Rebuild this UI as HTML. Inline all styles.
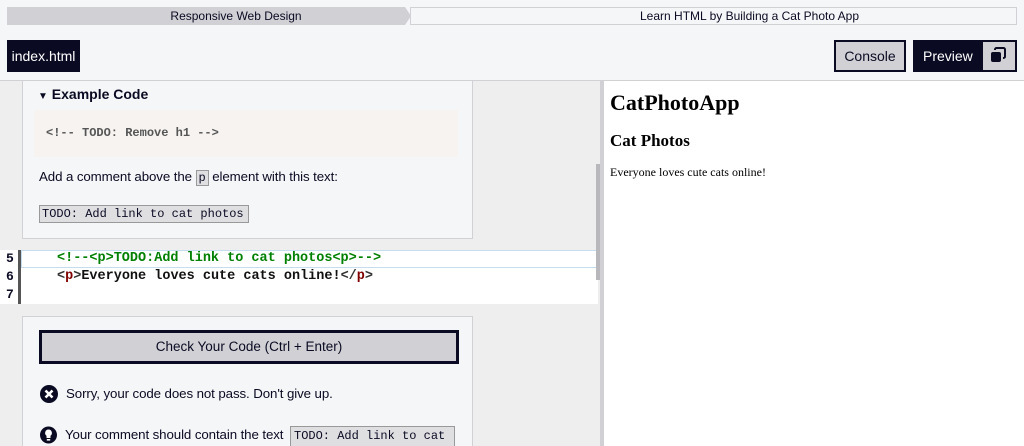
<!DOCTYPE html>
<html style="overflow:hidden;height:446px"><head><meta charset="utf-8"><style>
*{box-sizing:border-box;margin:0;padding:0}
body{width:1024px;height:446px;overflow:hidden;background:#f5f6f7;font-family:"Liberation Sans",sans-serif;position:relative;color:#0a0a23}
.abs{position:absolute}
.mono{font-family:"Liberation Mono","DejaVu Sans Mono",monospace}
</style></head><body>
<div class="abs" style="left:7px;top:7px;width:398px;height:18px;background:#d0d0d5;font-size:12px;line-height:18px;text-align:center;padding-left:60px">Responsive Web Design</div>
<div class="abs" style="left:405px;top:7px;width:0;height:0;border-top:9px solid transparent;border-bottom:9px solid transparent;border-left:6px solid #d0d0d5"></div>
<div class="abs" style="left:410px;top:7px;width:607px;height:18px;border:1px solid #d0d0d5;font-size:12px;line-height:16px;padding-left:229px">Learn HTML by Building a Cat Photo App</div>
<div class="abs" style="left:7px;top:40px;width:73px;height:32px;background:#0a0a23;color:#fff;font-size:14px;line-height:32px;text-align:center">index.html</div>
<div class="abs" style="left:834px;top:40px;width:72px;height:32px;background:#d0d0d5;border:2px solid #0a0a23;font-size:14px;line-height:28px;text-align:center">Console</div>
<div class="abs" style="left:913px;top:40px;width:104px;height:32px;background:#0a0a23;color:#fff;font-size:14px;line-height:32px;padding-left:10px">Preview</div>
<div class="abs" style="left:983px;top:42px;width:32px;height:28px;background:#d0d0d5"></div>
<svg class="abs" style="left:990px;top:47px" width="16" height="16" viewBox="0 0 16 16"><rect x="1" y="5" width="10" height="10" rx="2" fill="#0a0a23"/><path d="M5 3V2.5A1.5 1.5 0 0 1 6.5 1H13.5A1.5 1.5 0 0 1 15 2.5V9.5A1.5 1.5 0 0 1 13.5 11H13" fill="none" stroke="#0a0a23" stroke-width="2"/></svg>
<div class="abs" style="left:0;top:80px;width:1024px;height:1px;background:#d0d0d5"></div>
<div class="abs" style="left:0;top:81px;width:600px;height:365px;background:#eeeeee"></div>
<div class="abs" style="left:22px;top:81px;width:451px;height:158px;background:#f5f6f7;border:1px solid #d0d0d5;border-top:none"></div>
<div class="abs" style="left:38px;top:85px;font-size:14px;font-weight:bold;line-height:18px"><span style="font-size:10px">▼</span> Example Code</div>
<div class="abs mono" style="left:34px;top:110px;height:47px;background:#f6f3f1;font-size:12px;line-height:47px;padding-left:12px;color:#555;font-weight:bold;width:424px">&lt;!-- TODO: Remove h1 --&gt;</div>
<div class="abs" style="left:39px;top:167px;font-size:13.3px;line-height:20px;letter-spacing:-0.1px">Add a comment above the <span class="mono" style="background:#dfdfe2;border:1px solid #999;font-size:12px;padding:0 2px">p</span> element with this text:</div>
<div class="abs mono" style="left:39px;top:205px;width:210px;height:18px;background:#dfdfe2;border:1px solid #999;font-size:12px;line-height:16px;padding-left:2px">TODO: Add link to cat photos</div>
<div class="abs" style="left:0;top:250px;width:598px;height:54px;background:#fff"></div>
<div class="abs" style="left:18px;top:250px;width:3px;height:54px;background:#555"></div>
<div class="abs" style="left:21px;top:250px;width:577px;height:18px;border:1px solid #c6dcef"></div>
<div class="abs mono" style="left:6px;top:250px;font-size:13px;line-height:18px;font-weight:bold;color:#0a0a23">5<br>6<br>7</div>
<div class="abs mono" style="left:57px;top:250px;font-size:13.5px;line-height:18px;white-space:pre;font-weight:bold;color:#111"><span style="color:#008000">&lt;!--&lt;p&gt;TODO:Add link to cat photos&lt;p&gt;--&gt;</span>
<span style="color:#333">&lt;</span><span style="color:#800000">p</span><span style="color:#333">&gt;</span>Everyone loves cute cats online!<span style="color:#333">&lt;/</span><span style="color:#800000">p</span><span style="color:#333">&gt;</span></div>
<div class="abs" style="left:22px;top:316px;width:451px;height:130px;background:#f5f6f7;border:1px solid #d0d0d5;border-bottom:none"></div>
<div class="abs" style="left:39px;top:330px;width:420px;height:34px;background:#d0d0d5;border:3px solid #0a0a23;font-size:13.5px;line-height:28px;text-align:center">Check Your Code (Ctrl + Enter)</div>
<svg class="abs" style="left:40px;top:385px" width="18" height="18" viewBox="0 0 18 18"><circle cx="9" cy="9" r="9" fill="#0a0a23"/><path d="M5.5 5.5L12.5 12.5M12.5 5.5L5.5 12.5" stroke="#fff" stroke-width="2.6"/></svg>
<div class="abs" style="left:66px;top:385px;font-size:13.3px;line-height:18px;letter-spacing:-0.1px">Sorry, your code does not pass. Don't give up.</div>
<svg class="abs" style="left:40px;top:426px" width="17" height="18" viewBox="0 0 17 18"><circle cx="8.5" cy="9" r="8.5" fill="#0a0a23"/><path d="M8.5 3.5a3.5 3.5 0 0 0-2 6.3V12h4V9.8a3.5 3.5 0 0 0-2-6.3z" fill="#fff"/><rect x="6.8" y="13" width="3.4" height="1.6" fill="#fff"/></svg>
<div class="abs" style="left:65px;top:426px;font-size:13.3px;line-height:18px;white-space:nowrap;letter-spacing:-0.1px">Your comment should contain the text</div>
<div class="abs mono" style="left:290px;top:426px;width:165px;height:20px;background:#dfdfe2;border:1px solid #999;border-bottom:none;font-size:12px;line-height:18px;padding-left:3px;overflow:hidden;white-space:nowrap">TODO: Add link to cat</div>
<div class="abs" style="left:596px;top:164px;width:4px;height:116px;background:#b8b8bc"></div>
<div class="abs" style="left:600px;top:81px;width:4px;height:365px;background:#d0d0d5"></div>
<div class="abs" style="left:604px;top:81px;width:420px;height:365px;background:#fff;font-family:'Liberation Serif',serif;color:#000;padding-left:6px">
<div style="font-size:22px;font-weight:bold;margin-top:9px;line-height:26px">CatPhotoApp</div>
<div style="font-size:17px;font-weight:bold;margin-top:15px;line-height:20px">Cat Photos</div>
<div style="font-size:12px;margin-top:14px;line-height:14px">Everyone loves cute cats online!</div>
</div>
</body></html>
